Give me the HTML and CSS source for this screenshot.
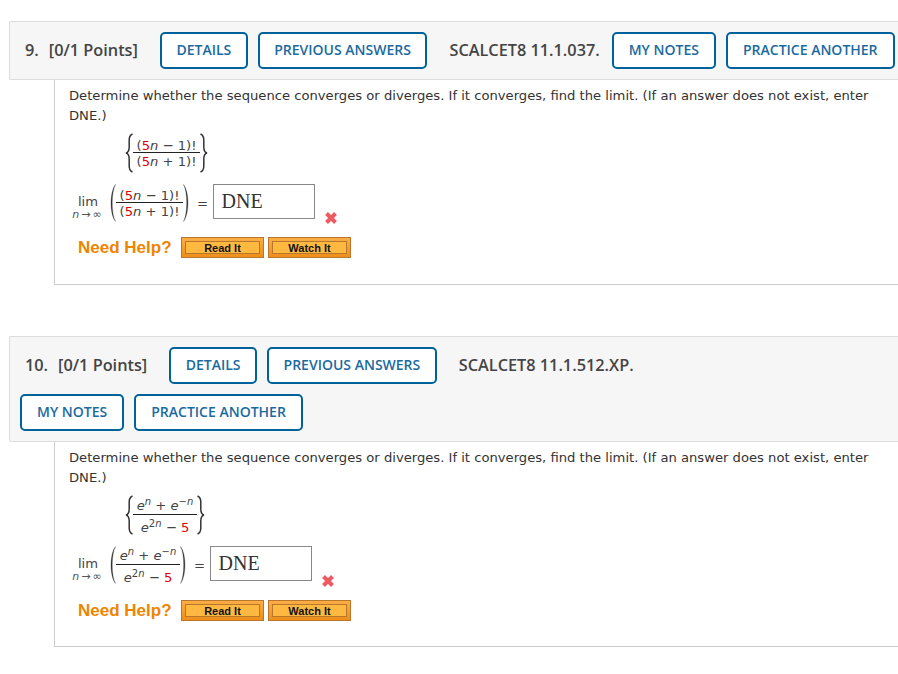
FILE: index.html
```html
<!DOCTYPE html>
<html lang="en">
<head>
<meta charset="utf-8">
<title>Questions</title>
<link rel="stylesheet" href="styles.css">
</head>
<body>
<section class="question">
  <header class="head">
    <div class="label"><span class="num">9.</span>[0/1 Points]</div>
    <a class="btn">DETAILS</a>
    <a class="btn">PREVIOUS ANSWERS</a>
    <div class="code">SCALCET8 11.1.037.</div>
    <div class="group"><a class="btn">MY NOTES</a><a class="btn">PRACTICE ANOTHER</a></div>
  </header>
  <div class="body">
    <p class="prompt">Determine whether the sequence converges or diverges. If it converges, find the limit. (If an answer does not exist, enter DNE.)</p>
    <div class="math set">
      <svg class="delim" width="8" height="40" viewBox="0 0 8 40"><path d="M7.5 1C5 2 4.2 4 4.2 7V14C4.2 17 3 19.5 1 20C3 20.5 4.2 23 4.2 26V33C4.2 36 5 38 7.5 39"/></svg>
      <div class="frac wide"><div class="top">(<i class="r">5</i><em>n</em> − 1)!</div><div class="bot">(<i class="r">5</i><em>n</em> + 1)!</div></div>
      <svg class="delim" width="8" height="40" viewBox="0 0 8 40"><path d="M.5 1C3 2 3.8 4 3.8 7V14C3.8 17 5 19.5 7 20C5 20.5 3.8 23 3.8 26V33C3.8 36 3 38 .5 39"/></svg>
    </div>
    <div class="math limit">
      <div class="lim"><span>lim</span><small><em>n</em>→∞</small></div>
      <svg class="paren" width="8" height="38" viewBox="0 0 8 38"><path d="M7.5 .5C1.5 8 1.5 30 7.5 37.5C3.2 30 3.2 8 7.5 .5Z"/></svg>
      <div class="frac wide"><div class="top">(<i class="r">5</i><em>n</em> − 1)!</div><div class="bot">(<i class="r">5</i><em>n</em> + 1)!</div></div>
      <svg class="paren" width="8" height="38" viewBox="0 0 8 38"><path d="M.5 .5C6.5 8 6.5 30 .5 37.5C4.8 30 4.8 8 .5 .5Z"/></svg>
      <span class="eq">=</span>
      <div class="answer">DNE</div>
      <svg class="cross" width="14" height="14" viewBox="0 0 14 14"><path d="M2.5 2.5L11.5 11.5M11.5 2.5L2.5 11.5"/></svg>
    </div>
    <div class="help">
      <span class="need">Need Help?</span>
      <a class="res"><span>Read It</span></a>
      <a class="res"><span>Watch It</span></a>
    </div>
  </div>
</section>
<section class="question second">
  <header class="head">
    <div class="label"><span class="num">10.</span>[0/1 Points]</div>
    <a class="btn">DETAILS</a>
    <a class="btn">PREVIOUS ANSWERS</a>
    <div class="code">SCALCET8 11.1.512.XP.</div>
    <div class="group"><a class="btn">MY NOTES</a><a class="btn">PRACTICE ANOTHER</a></div>
  </header>
  <div class="body">
    <p class="prompt">Determine whether the sequence converges or diverges. If it converges, find the limit. (If an answer does not exist, enter DNE.)</p>
    <div class="math set">
      <svg class="delim" width="8" height="40" viewBox="0 0 8 40"><path d="M7.5 1C5 2 4.2 4 4.2 7V14C4.2 17 3 19.5 1 20C3 20.5 4.2 23 4.2 26V33C4.2 36 5 38 7.5 39"/></svg>
      <div class="frac tall"><div class="top"><em>e<sup>n</sup></em> + <em>e<sup>−n</sup></em></div><div class="bot"><em>e</em><sup>2<em>n</em></sup> − <i class="r">5</i></div></div>
      <svg class="delim" width="8" height="40" viewBox="0 0 8 40"><path d="M.5 1C3 2 3.8 4 3.8 7V14C3.8 17 5 19.5 7 20C5 20.5 3.8 23 3.8 26V33C3.8 36 3 38 .5 39"/></svg>
    </div>
    <div class="math limit">
      <div class="lim"><span>lim</span><small><em>n</em>→∞</small></div>
      <svg class="paren" width="8" height="38" viewBox="0 0 8 38"><path d="M7.5 .5C1.5 8 1.5 30 7.5 37.5C3.2 30 3.2 8 7.5 .5Z"/></svg>
      <div class="frac tall"><div class="top"><em>e<sup>n</sup></em> + <em>e<sup>−n</sup></em></div><div class="bot"><em>e</em><sup>2<em>n</em></sup> − <i class="r">5</i></div></div>
      <svg class="paren" width="8" height="38" viewBox="0 0 8 38"><path d="M.5 .5C6.5 8 6.5 30 .5 37.5C4.8 30 4.8 8 .5 .5Z"/></svg>
      <span class="eq">=</span>
      <div class="answer">DNE</div>
      <svg class="cross" width="14" height="14" viewBox="0 0 14 14"><path d="M2.5 2.5L11.5 11.5M11.5 2.5L2.5 11.5"/></svg>
    </div>
    <div class="help">
      <span class="need">Need Help?</span>
      <a class="res"><span>Read It</span></a>
      <a class="res"><span>Watch It</span></a>
    </div>
  </div>
</section>
</body>
</html>
```
FILE: styles.css
```css
html, body { margin: 0; padding: 0; }
body { background: #fff; overflow-x: hidden; padding-top: 21px; color: #333; font-family: "DejaVu Sans", sans-serif; font-size: 13.15px; }
.question { margin-left: 9px; width: 889px; }
.second { margin-top: 51px; }
.head { display: flex; flex-wrap: wrap; align-items: center; gap: 10px; box-sizing: border-box; padding: 10px 0 10px 10px; background: #f6f6f6; border: 1px solid #ddd; border-right: 0; border-radius: 2px 0 0 2px; font-family: "Open Sans", sans-serif; font-size: 14px; font-weight: 600; }
.label { margin: 0 12px 2px 5px; color: #444; font-size: 16.3px; }
.num { margin-right: 10px; }
.code { margin: 0 2px 2px 12px; color: #444; font-size: 16.3px; }
.group { display: flex; gap: 10px; }
.btn { box-sizing: border-box; height: 37px; display: flex; align-items: center; padding: 0 14.5px 2px; border: 2px solid #00629b; border-radius: 5px; background: #fff; color: #1a6a9f; white-space: nowrap; }
.group .btn { padding: 0 15px 2px; }
.body { margin-left: 45px; padding: 6px 0 26px 14px; border-left: 1px solid #ccc; border-bottom: 1px solid #ccc; }
.prompt { margin: 0 0 -1px; line-height: 20px; color: #333; width: 810px; }
.math { display: flex; align-items: center; color: #444; }
.math em { font-style: italic; }
.math i.r { font-style: normal; color: #d00; }
.delim { flex: none; }
.delim path { fill: none; stroke: #333; stroke-width: 1.5; }
.paren { flex: none; }
.paren path { fill: #333; stroke: #333; stroke-width: .3; }
.set { margin: 8px 0 0 56px; height: 40px; }
.limit { margin: 11px 0 0 4px; height: 38px; }
.frac { display: flex; flex-direction: column; align-items: center; }
.frac.wide { width: 67px; }
.frac.tall { width: 64px; }
.top { align-self: stretch; height: 15px; text-align: center; border-bottom: 1px solid #222; line-height: 17px; white-space: nowrap; }
.bot { height: 16px; line-height: 18px; white-space: nowrap; }
.tall .top { height: 19px; line-height: 21px; }
.tall .bot { height: 21px; line-height: 25px; }
sup { font-size: 10px; line-height: 0; vertical-align: 5px; }
.lim { width: 30px; margin: 10px 5px 0 0; display: flex; flex-direction: column; align-items: center; line-height: 13px; }
.lim small { font-size: 11px; letter-spacing: 2px; white-space: nowrap; color: #555; }
.eq { margin: 0 5px 0 6px; }
.answer { box-sizing: border-box; width: 102px; height: 35px; margin-bottom: 3px; padding-left: 7.5px; border: 1px solid #888; background: #fff; font: 20px/32px "Liberation Serif", serif; color: #333; }
.cross { margin: 30px 0 0 9px; }
.cross path { fill: none; stroke: #ef5a62; stroke-width: 4; }
.help { display: flex; align-items: center; gap: 4px; margin: 15px 0 0 9px; height: 21px; }
.need { width: 99px; color: #ee8500; font: bold 17px "Liberation Sans", sans-serif; white-space: nowrap; }
.res { box-sizing: border-box; width: 83px; height: 21px; padding: 3px; border: 1px solid #b9762d; background: linear-gradient(#fbad45, #ee8f18); display: flex; }
.res span { flex: 1; padding-top: 1px; border: 1px solid #b9762d; background: #ffb941; color: #111; font: bold 11px/11px "Liberation Sans", sans-serif; display: flex; align-items: center; justify-content: center; }
.second .cross { margin-top: 32px; }
.second .body { padding-bottom: 25px; }
.second .help { margin-top: 16px; }
```
